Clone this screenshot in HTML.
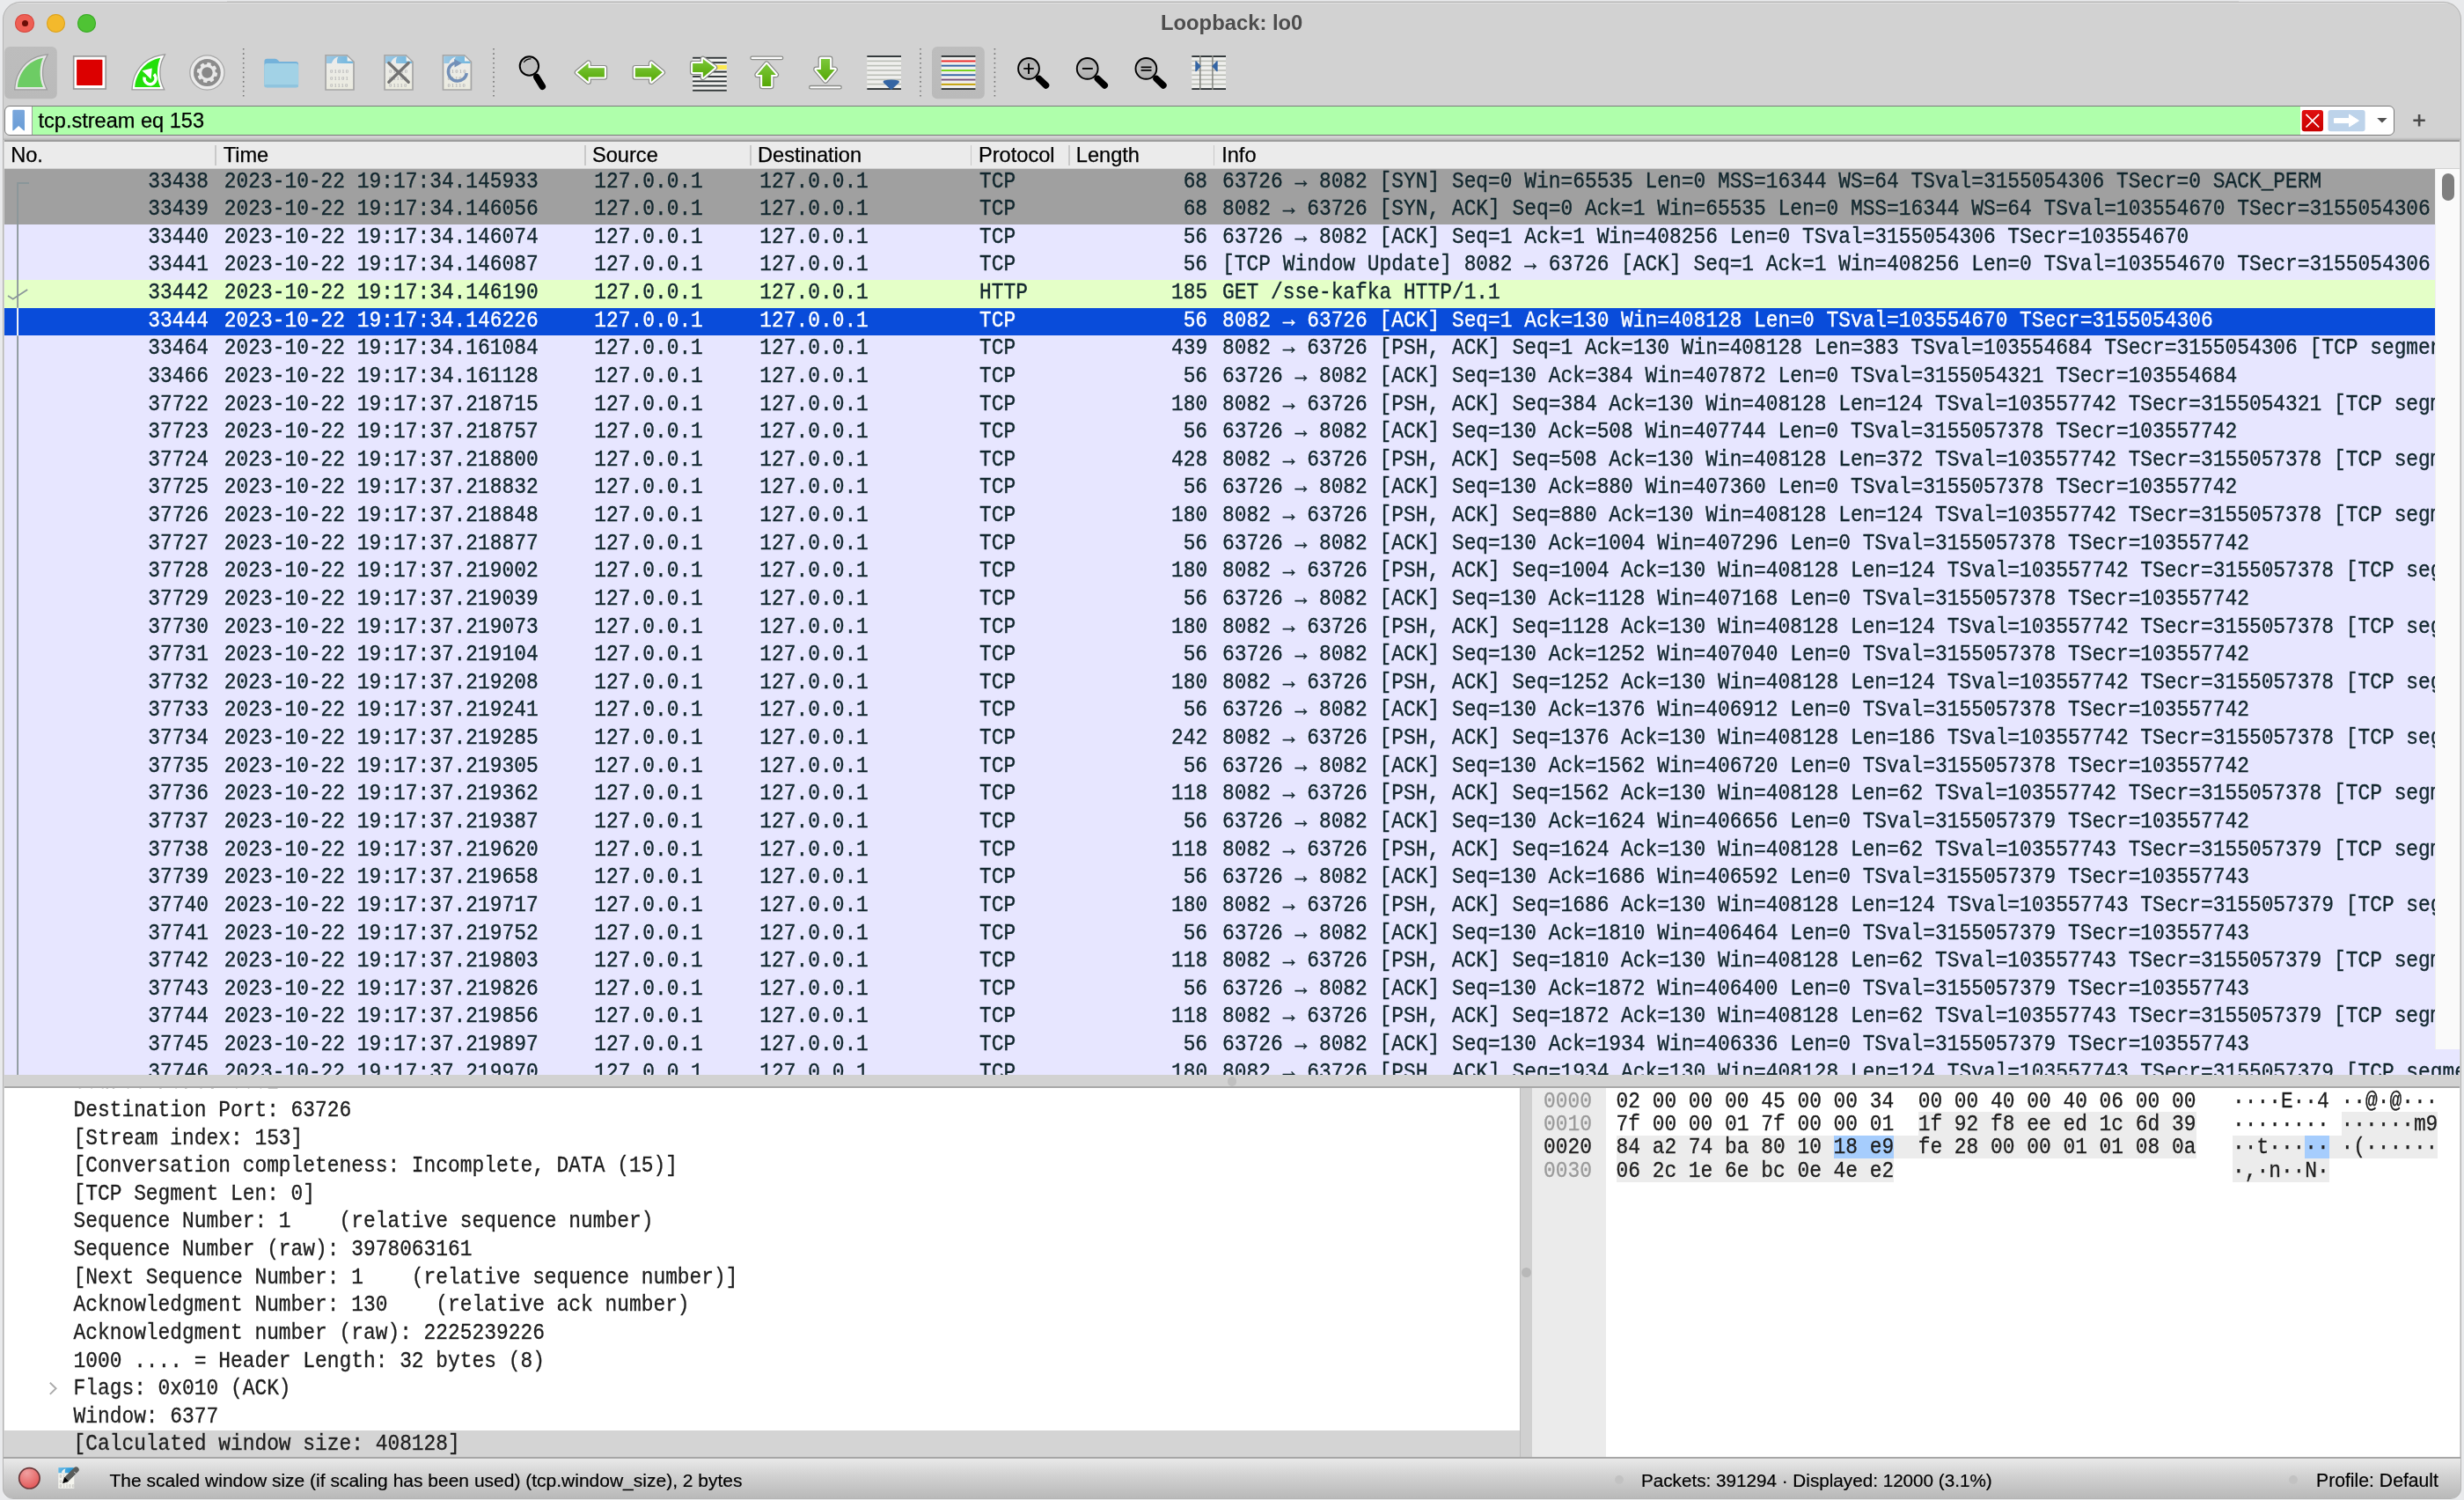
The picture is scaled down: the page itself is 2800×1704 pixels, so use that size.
<!DOCTYPE html>
<html><head><meta charset="utf-8"><title>Wireshark</title>
<style>
*{margin:0;padding:0;box-sizing:border-box}
html,body{width:2800px;height:1704px;overflow:hidden;background:#e9eaec;position:relative}
.a{position:absolute}
.sans{font-family:"Liberation Sans",sans-serif}
.mono{font-family:"Liberation Mono",monospace}
#clip{position:absolute;will-change:transform;left:0;top:0;width:2800px;height:1704px;clip-path:inset(1.8px 3px 2px 3px round 20px 20px 12px 12px);background:#d2d2d2}
.row{position:absolute;-webkit-text-stroke:0.35px currentColor;left:5px;width:2790px;height:31.630px;font-family:"Liberation Mono",monospace;font-size:22.888px;line-height:31.630px;color:#12272e;white-space:pre}
.row span{position:absolute;top:0;transform:scaleY(1.13);transform-origin:0 21.5px}
.hdr{position:absolute;-webkit-text-stroke:0.25px #000;top:161px;font-family:"Liberation Sans",sans-serif;font-size:23.6px;color:#000;white-space:pre;line-height:30px}
.sep{position:absolute;top:165px;width:1.5px;height:23px;background:#c9c9c9}
.dl{position:absolute;-webkit-text-stroke:0.3px currentColor;transform:scaleY(1.13);transform-origin:0 21.5px;left:83.5px;font-family:"Liberation Mono",monospace;font-size:22.888px;line-height:31.630px;color:#1e1e1e;white-space:pre}
.hx{position:absolute;-webkit-text-stroke:0.3px currentColor;transform:scaleY(1.13);transform-origin:0 19.3px;font-family:"Liberation Mono",monospace;font-size:22.888px;line-height:26.4px;color:#1e1e1e;white-space:pre}
</style></head><body>
<div id="clip">

<div class="a" style="left:0;top:2.6px;width:2800px;height:1.6px;background:#e2e2e2"></div>
<div class="a" style="left:17.4px;top:15.700000000000001px;width:21.2px;height:21.2px;border-radius:50%;background:#ee5f54;box-shadow:inset 0 0 0 1px #d54940"></div>
<div class="a" style="left:52.699999999999996px;top:15.700000000000001px;width:21.2px;height:21.2px;border-radius:50%;background:#f3b92c;box-shadow:inset 0 0 0 1px #d9a020"></div>
<div class="a" style="left:87.80000000000001px;top:15.700000000000001px;width:21.2px;height:21.2px;border-radius:50%;background:#4fc334;box-shadow:inset 0 0 0 1px #3ba828"></div>
<div class="a" style="left:24.5px;top:22.8px;width:7px;height:7px;border-radius:50%;background:#6a0e06"></div>
<div class="a sans" style="left:1319px;top:10.5px;font-size:23.8px;font-weight:bold;color:#4d4d4d;line-height:30px;white-space:pre">Loopback: lo0</div>
<svg class="a" style="left:0;top:0" width="1420" height="120" viewBox="0 0 1420 120">
<defs>
<linearGradient id="pbg" x1="0" y1="0" x2="0" y2="1"><stop offset="0" stop-color="#bdbdbd"/><stop offset="1" stop-color="#bababa"/></linearGradient>
<linearGradient id="grn" x1="0" y1="0" x2="0" y2="1"><stop offset="0" stop-color="#7cc83a"/><stop offset="1" stop-color="#56a806"/></linearGradient>
<linearGradient id="lens" x1="0" y1="0" x2="0" y2="1"><stop offset="0" stop-color="#a9a9a9"/><stop offset="0.5" stop-color="#bdbdbd"/><stop offset="1" stop-color="#a9a9a9"/></linearGradient>
<linearGradient id="docblue" x1="0" y1="0" x2="1" y2="0"><stop offset="0" stop-color="#9cc8e4"/><stop offset="1" stop-color="#6fb5dd"/></linearGradient>
<linearGradient id="docbody" x1="0" y1="0" x2="0" y2="1"><stop offset="0" stop-color="#ececec"/><stop offset="1" stop-color="#ebebdf"/></linearGradient>
</defs>
<!-- pressed start bg -->
<rect x="5.1" y="53" width="59.7" height="59.2" rx="6" fill="url(#pbg)"/>
<!-- fin 1 -->
<g stroke-linejoin="miter" stroke-miterlimit="10">
<path d="M19.9,99 C21,84 31,69 49,65.8 C45,74 44,88 48.9,99 Z" fill="#6dcc64" stroke="#9c9c9c" stroke-width="7.2"/>
<path d="M19.9,99 C21,84 31,69 49,65.8 C45,74 44,88 48.9,99 Z" fill="#6dcc64" stroke="#e6e6e6" stroke-width="4.6"/>
<path d="M19.9,99 C21,84 31,69 49,65.8 C45,74 44,88 48.9,99 Z" fill="#6dcc64"/>
</g>
<!-- stop -->
<rect x="83.7" y="63.9" width="36.5" height="37.1" fill="#fff" stroke="#999" stroke-width="1.7"/>
<rect x="87.1" y="67.8" width="29.3" height="29.2" rx="0.8" fill="#dc0000"/>
<!-- fin 2 restart -->
<g stroke-linejoin="miter" stroke-miterlimit="10" transform="translate(133.3,0)">
<path d="M19.9,99 C21,84 31,69 49,65.8 C45,74 44,88 48.9,99 Z" fill="#22e00a" stroke="#999" stroke-width="7.2"/>
<path d="M19.9,99 C21,84 31,69 49,65.8 C45,74 44,88 48.9,99 Z" fill="#22e00a" stroke="#fff" stroke-width="4.6"/>
<path d="M19.9,99 C21,84 31,69 49,65.8 C45,74 44,88 48.9,99 Z" fill="#22e00a"/>
</g>
<path d="M174.9,84.4 A6.5,6.5 0 1 1 164.2,87.6" fill="none" stroke="#fff" stroke-width="3.6"/>
<path d="M161.5,80.3 L172.8,77.4 L171.6,90 Z" fill="#fff"/>
<!-- gear -->
<circle cx="235.4" cy="82.5" r="19.6" fill="#ebebeb" stroke="#a8a8a8" stroke-width="1.3"/>
<circle cx="235.4" cy="82.5" r="15.4" fill="#8c8c8c"/>
<g fill="#e9e9e9" transform="translate(235.4,82.5) rotate(12)">
<circle r="9.4"/>
<rect x="-2.3" y="-11.6" width="4.6" height="23.2" rx="1"/>
<rect x="-2.3" y="-11.6" width="4.6" height="23.2" rx="1" transform="rotate(45)"/>
<rect x="-2.3" y="-11.6" width="4.6" height="23.2" rx="1" transform="rotate(90)"/>
<rect x="-2.3" y="-11.6" width="4.6" height="23.2" rx="1" transform="rotate(135)"/>
</g>
<circle cx="235.4" cy="82.5" r="6.2" fill="#888"/>
<!-- separators -->
<g fill="#555">
<path id="dots" d="M275.9,55 h1.6 v1.6 h-1.6z M275.9,60.3 h1.6 v1.6 h-1.6z M275.9,65.6 h1.6 v1.6 h-1.6z M275.9,70.9 h1.6 v1.6 h-1.6z M275.9,76.2 h1.6 v1.6 h-1.6z M275.9,81.5 h1.6 v1.6 h-1.6z M275.9,86.8 h1.6 v1.6 h-1.6z M275.9,92.1 h1.6 v1.6 h-1.6z M275.9,97.4 h1.6 v1.6 h-1.6z M275.9,102.7 h1.6 v1.6 h-1.6z M275.9,108 h1.6 v1.6 h-1.6z" opacity="0.75"/>
<use href="#dots" x="284.3"/>
<use href="#dots" x="769.3"/>
<use href="#dots" x="853.7"/>
</g>
<!-- folder -->
<path d="M300.4,99.3 V69.7 Q300.4,66.7 303.4,66.7 H312.6 Q314.6,66.7 316,68.6 L317.4,69.9 H336.1 Q339.1,69.9 339.1,72.9 V96.3 Q339.1,99.3 336.1,99.3 H303.4 Q300.4,99.3 300.4,96.3 Z" fill="#74b2da"/>
<rect x="300.4" y="72" width="38.7" height="27.3" rx="3" fill="#a2d2e6"/>
<rect x="300.4" y="96" width="38.7" height="3.3" rx="1.5" fill="#8fc4de"/>
<!-- doc template -->
<g id="doc">
<path d="M370.1,62.9 H394.3 L402,70.4 V102 H370.1 Z" fill="url(#docbody)" stroke="#a5a5a5" stroke-width="1.7" stroke-linejoin="miter"/>
<path d="M370.9,63.7 H394 L401.2,70.7 V71.9 H370.9 Z" fill="url(#docblue)"/>
<path d="M376.7,71.9 C378.5,67.5 381,65 384.4,64.4 C383,66.5 382.6,69.5 383.3,71.9 Z" fill="#ebebeb"/>
<path d="M394.6,64 V69.4 H400.3 Z" fill="#f2f2ef"/>
<g font-family="Liberation Serif" font-size="6.8" font-weight="bold" fill="#bcbcbc" letter-spacing="1.05">
<text x="375" y="82.6">01010</text>
<text x="375" y="90.5">01101</text>
<text x="375" y="98.5">01110</text>
</g>
</g>
<use href="#doc" x="67"/>
<use href="#doc" x="133.4"/>
<path d="M441.8,71.5 L464.2,93.3 M464.2,71.5 L441.8,93.3" stroke="#737373" stroke-width="3.3" stroke-linecap="round"/>
<path d="M530.3,82.9 A10.5,10.5 0 1 1 519,71" fill="none" stroke="#7390b8" stroke-width="3.5"/>
<path d="M516.2,67 L524.8,71.8 L516.6,76.6 Z" fill="#7390b8"/>
<!-- magnifier find -->
<circle cx="601.4" cy="75" r="10.7" fill="#bfbfbf" stroke="#000" stroke-width="2"/>
<path d="M595.5,70.5 Q598,67 603,66.8" fill="none" stroke="#000" stroke-width="1.2" stroke-linecap="round"/>
<path d="M609.8,87.5 L616.4,98.3" stroke="#000" stroke-width="7.4" stroke-linecap="round"/>
<!-- left arrow -->
<g stroke-linejoin="round">
<path d="M656,82.3 L668.6,71.8 V77.2 H686.9 V87.4 H668.6 V92.8 Z" fill="#888" stroke="#8a8c88" stroke-width="6.6"/>
<path d="M656,82.3 L668.6,71.8 V77.2 H686.9 V87.4 H668.6 V92.8 Z" fill="#fff" stroke="#fff" stroke-width="4.2"/>
<path d="M656,82.3 L668.6,71.8 V77.2 H686.9 V87.4 H668.6 V92.8 Z" fill="url(#grn)"/>
<!-- right arrow -->
<path d="M752.75,82.3 L740.15,71.8 V77.2 H721.85 V87.4 H740.15 V92.8 Z" fill="#888" stroke="#8a8c88" stroke-width="6.6"/>
<path d="M752.75,82.3 L740.15,71.8 V77.2 H721.85 V87.4 H740.15 V92.8 Z" fill="#fff" stroke="#fff" stroke-width="4.2"/>
<path d="M752.75,82.3 L740.15,71.8 V77.2 H721.85 V87.4 H740.15 V92.8 Z" fill="url(#grn)"/>
</g>
<!-- goto packet -->
<rect x="787.1" y="64.8" width="38.7" height="38.8" fill="#efefed"/>
<g fill="#2e3436">
<rect x="787.1" y="64.8" width="38.7" height="1.9"/>
<rect x="787.1" y="70.2" width="38.7" height="1.9"/>
<rect x="787.1" y="80.6" width="38.7" height="1.9"/>
<rect x="787.1" y="86" width="38.7" height="1.9"/>
<rect x="787.1" y="91.4" width="38.7" height="1.9"/>
<rect x="787.1" y="96.5" width="38.7" height="1.9"/>
<rect x="787.1" y="101.8" width="38.7" height="1.9"/>
</g>
<rect x="812" y="74" width="13.8" height="4.9" fill="#fce94f"/>
<g stroke-linejoin="round">
<path d="M812.1,76.7 L798.8,66.9 V72 H787.1 V82 H798.8 V87.9 Z" fill="#888" stroke="#8a8c88" stroke-width="6.4"/>
<path d="M812.1,76.7 L798.8,66.9 V72 H787.1 V82 H798.8 V87.9 Z" fill="#fff" stroke="#fff" stroke-width="4"/>
<path d="M812.1,76.7 L798.8,66.9 V72 H787.1 V82 H798.8 V87.9 Z" fill="url(#grn)"/>
<!-- first packet -->
<rect x="852.9" y="64.1" width="36.8" height="3.5" rx="1.7" fill="#fff" stroke="#8a8c88" stroke-width="1.3"/>
<path d="M871.1,72.8 L881.8,85 H876.2 V97.9 H866.2 V85 H860.6 Z" fill="#888" stroke="#8a8c88" stroke-width="6.6"/>
<path d="M871.1,72.8 L881.8,85 H876.2 V97.9 H866.2 V85 H860.6 Z" fill="#fff" stroke="#fff" stroke-width="4.2"/>
<path d="M871.1,72.8 L881.8,85 H876.2 V97.9 H866.2 V85 H860.6 Z" fill="url(#grn)"/>
<!-- last packet -->
<rect x="919.6" y="97.5" width="36.6" height="3.4" rx="1.7" fill="#fff" stroke="#8a8c88" stroke-width="1.3"/>
<path d="M938,91.5 L948.7,78.9 H943.1 V66.9 H932.9 V78.9 H927.5 Z" fill="#888" stroke="#8a8c88" stroke-width="6.6"/>
<path d="M938,91.5 L948.7,78.9 H943.1 V66.9 H932.9 V78.9 H927.5 Z" fill="#fff" stroke="#fff" stroke-width="4.2"/>
<path d="M938,91.5 L948.7,78.9 H943.1 V66.9 H932.9 V78.9 H927.5 Z" fill="url(#grn)"/>
</g>
<!-- autoscroll -->
<g id="stripes">
<rect x="985.3" y="63.1" width="38.7" height="38.8" fill="#efefed"/>
<g fill="#babdb6">
<rect x="985.3" y="68.6" width="38.7" height="1.6"/>
<rect x="985.3" y="73.8" width="38.7" height="1.6"/>
<rect x="985.3" y="79.1" width="38.7" height="1.6"/>
<rect x="985.3" y="84.5" width="38.7" height="1.6"/>
<rect x="985.3" y="89.6" width="38.7" height="1.6"/>
<rect x="985.3" y="94.8" width="38.7" height="1.6"/>
</g>
<rect x="985.3" y="63.1" width="38.7" height="1.9" fill="#2e3436"/>
<rect x="985.3" y="100.1" width="38.7" height="1.9" fill="#2e3436"/>
</g>
<path d="M1004.5,91.6 Q1012.8,89.6 1021,91.6 Q1022.5,92.6 1021.5,94 L1013.5,101.5 Q1012.8,102.2 1012,101.5 L1004,94 Q1003,92.6 1004.5,91.6 Z" fill="#3465a4"/>
<!-- colorize pressed -->
<rect x="1059" y="53" width="59.8" height="59.3" rx="6" fill="url(#pbg)"/>
<rect x="1069.7" y="63.1" width="38.8" height="38.8" fill="#efefed"/>
<rect x="1069.7" y="63" width="38.8" height="1.9" fill="#2e3436"/>
<rect x="1069.7" y="68.5" width="38.8" height="1.9" fill="#ef2929"/>
<rect x="1069.7" y="73.7" width="38.8" height="1.9" fill="#3465a4"/>
<rect x="1069.7" y="79.1" width="38.8" height="1.9" fill="#73d216"/>
<rect x="1069.7" y="84.3" width="38.8" height="1.9" fill="#3465a4"/>
<rect x="1069.7" y="89.6" width="38.8" height="1.9" fill="#75507b"/>
<rect x="1069.7" y="94.9" width="38.8" height="1.9" fill="#c4a000"/>
<rect x="1069.7" y="100.1" width="38.8" height="1.9" fill="#2e3436"/>
<!-- zoom in/out/normal -->
<g id="zl">
<circle cx="1169" cy="77.9" r="11.9" fill="url(#lens)" stroke="#000" stroke-width="1.9"/>
<path d="M1180.6,89.3 L1188.6,97" stroke="#000" stroke-width="7.4" stroke-linecap="round"/>
</g>
<path d="M1163.2,77.9 H1174.8 M1169,72 V84" stroke="#000" stroke-width="1.9"/>
<use href="#zl" x="66.7"/>
<path d="M1229.9,77.9 H1241.8" stroke="#000" stroke-width="1.9"/>
<use href="#zl" x="133.4"/>
<path d="M1296.6,76.4 H1308.5 M1296.6,79.9 H1308.5" stroke="#000" stroke-width="1.6"/>
<!-- resize columns -->
<use href="#stripes" x="369"/>
<rect x="1363" y="63.1" width="1.6" height="38.8" fill="#888a85"/>
<rect x="1377.1" y="63.1" width="1.6" height="38.8" fill="#888a85"/>
<path d="M1358.3,70 Q1358,69 1359.3,69.3 L1364.8,75.3 L1359.3,81.3 Q1358,81.6 1358.3,80.6 Z" fill="#3465a4"/>
<path d="M1383.7,70 Q1384,69 1382.7,69.3 L1377.2,75.3 L1382.7,81.3 Q1384,81.6 1383.7,80.6 Z" fill="#3465a4"/>
</svg>

<div class="a" style="left:5.3px;top:119.9px;width:2716px;height:34.2px;border:1.8px solid #7a7a7a;border-radius:6px;background:#fff;overflow:hidden"><div class="a" style="left:29.4px;top:0;bottom:0;width:1.6px;background:#9c9c9c"></div><div class="a" style="left:31px;top:0;bottom:0;width:2577px;background:#afffab"></div></div>
<svg class="a" style="left:0;top:110px" width="2800" height="50" viewBox="0 110 2800 50">
<defs>
<linearGradient id="bm" x1="0" y1="0" x2="0" y2="1"><stop offset="0" stop-color="#7aa7dc"/><stop offset="1" stop-color="#6a9dd6"/></linearGradient>
<linearGradient id="rx" x1="0" y1="0" x2="0" y2="1"><stop offset="0" stop-color="#e01010"/><stop offset="1" stop-color="#c80000"/></linearGradient>
</defs>
<path d="M14.3,126.2 Q14.3,124.8 15.7,124.8 H26.6 Q28,124.8 28,126.2 V147.4 Q28,149 26.6,148 L21.15,143 L15.7,148 Q14.3,149 14.3,147.4 Z" fill="url(#bm)"/>
<rect x="2615.7" y="125" width="24.3" height="24.3" rx="3" fill="url(#rx)"/>
<path d="M2620.5,129.8 L2635.2,144.5 M2635.2,129.8 L2620.5,144.5" stroke="#fff" stroke-width="1.7"/>
<rect x="2645.5" y="125" width="42.1" height="24.3" rx="3" fill="#bdd3ea"/>
<path d="M2652.5,134.6 H2669.5 V130 L2680.5,137.1 L2669.5,144 V139.6 H2652.5 Z" fill="#fff" stroke="#fff" stroke-width="1" stroke-linejoin="round"/>
<path d="M2701.2,134 H2712.6 L2706.9,139.6 Z" fill="#505050"/>
<path d="M2742.4,136.8 H2755.8 M2749.1,130 V143.6" stroke="#4a4a4a" stroke-width="2.6"/>
</svg>

<div class="a sans" style="left:43.5px;top:122px;font-size:23.55px;-webkit-text-stroke:0.25px #000;line-height:30px;color:#000;white-space:pre">tcp.stream eq 153</div>
<div class="a" style="left:0;top:156px;width:2800px;height:3px;background:linear-gradient(#d2d2d2,#b4b4b4)"></div>
<div class="a" style="left:5px;top:159.3px;width:2790px;height:1.5px;background:#9c9c9c"></div>
<div class="a" style="left:5px;top:160.8px;width:2790px;height:30.7px;background:#ebebeb"></div>
<div class="hdr" style="left:12.2px">No.</div>
<div class="hdr" style="left:253.7px">Time</div>
<div class="hdr" style="left:673px">Source</div>
<div class="hdr" style="left:861px">Destination</div>
<div class="hdr" style="left:1112px">Protocol</div>
<div class="hdr" style="left:1222.8px">Length</div>
<div class="hdr" style="left:1388.2px">Info</div>
<div class="sep" style="left:244.3px"></div>
<div class="sep" style="left:664.1px"></div>
<div class="sep" style="left:852.1px"></div>
<div class="sep" style="left:1102.9px"></div>
<div class="sep" style="left:1214px"></div>
<div class="sep" style="left:1378.9px"></div>
<div class="a" style="left:5px;top:191.5px;width:2790px;height:1029.5px;overflow:hidden">
<div class="row" style="left:0;top:0.000px;background:#a0a0a0;color:#12272e;width:2790px"><span style="right:2558.0px">33438</span><span style="left:249.8px">2023-10-22 19:17:34.145933</span><span style="left:670.3px">127.0.0.1</span><span style="left:858.3px">127.0.0.1</span><span style="left:1108.1px">TCP</span><span style="right:1422.9px">68</span><span style="left:1384.1px">63726 → 8082 [SYN] Seq=0 Win=65535 Len=0 MSS=16344 WS=64 TSval=3155054306 TSecr=0 SACK_PERM</span></div>
<div class="row" style="left:0;top:31.630px;background:#a0a0a0;color:#12272e;width:2790px"><span style="right:2558.0px">33439</span><span style="left:249.8px">2023-10-22 19:17:34.146056</span><span style="left:670.3px">127.0.0.1</span><span style="left:858.3px">127.0.0.1</span><span style="left:1108.1px">TCP</span><span style="right:1422.9px">68</span><span style="left:1384.1px">8082 → 63726 [SYN, ACK] Seq=0 Ack=1 Win=65535 Len=0 MSS=16344 WS=64 TSval=103554670 TSecr=3155054306</span></div>
<div class="row" style="left:0;top:63.260px;background:#e7e6ff;color:#12272e;width:2790px"><span style="right:2558.0px">33440</span><span style="left:249.8px">2023-10-22 19:17:34.146074</span><span style="left:670.3px">127.0.0.1</span><span style="left:858.3px">127.0.0.1</span><span style="left:1108.1px">TCP</span><span style="right:1422.9px">56</span><span style="left:1384.1px">63726 → 8082 [ACK] Seq=1 Ack=1 Win=408256 Len=0 TSval=3155054306 TSecr=103554670</span></div>
<div class="row" style="left:0;top:94.890px;background:#e7e6ff;color:#12272e;width:2790px"><span style="right:2558.0px">33441</span><span style="left:249.8px">2023-10-22 19:17:34.146087</span><span style="left:670.3px">127.0.0.1</span><span style="left:858.3px">127.0.0.1</span><span style="left:1108.1px">TCP</span><span style="right:1422.9px">56</span><span style="left:1384.1px">[TCP Window Update] 8082 → 63726 [ACK] Seq=1 Ack=1 Win=408256 Len=0 TSval=103554670 TSecr=3155054306</span></div>
<div class="row" style="left:0;top:126.520px;background:#e4ffc7;color:#12272e;width:2790px"><span style="right:2558.0px">33442</span><span style="left:249.8px">2023-10-22 19:17:34.146190</span><span style="left:670.3px">127.0.0.1</span><span style="left:858.3px">127.0.0.1</span><span style="left:1108.1px">HTTP</span><span style="right:1422.9px">185</span><span style="left:1384.1px">GET /sse-kafka HTTP/1.1</span></div>
<div class="row" style="left:0;top:158.150px;background:#094cda;color:#fff;width:2790px"><span style="right:2558.0px">33444</span><span style="left:249.8px">2023-10-22 19:17:34.146226</span><span style="left:670.3px">127.0.0.1</span><span style="left:858.3px">127.0.0.1</span><span style="left:1108.1px">TCP</span><span style="right:1422.9px">56</span><span style="left:1384.1px">8082 → 63726 [ACK] Seq=1 Ack=130 Win=408128 Len=0 TSval=103554670 TSecr=3155054306</span></div>
<div class="row" style="left:0;top:189.780px;background:#e7e6ff;color:#12272e;width:2790px"><span style="right:2558.0px">33464</span><span style="left:249.8px">2023-10-22 19:17:34.161084</span><span style="left:670.3px">127.0.0.1</span><span style="left:858.3px">127.0.0.1</span><span style="left:1108.1px">TCP</span><span style="right:1422.9px">439</span><span style="left:1384.1px">8082 → 63726 [PSH, ACK] Seq=1 Ack=130 Win=408128 Len=383 TSval=103554684 TSecr=3155054306 [TCP segment of a reassembled PDU]</span></div>
<div class="row" style="left:0;top:221.410px;background:#e7e6ff;color:#12272e;width:2790px"><span style="right:2558.0px">33466</span><span style="left:249.8px">2023-10-22 19:17:34.161128</span><span style="left:670.3px">127.0.0.1</span><span style="left:858.3px">127.0.0.1</span><span style="left:1108.1px">TCP</span><span style="right:1422.9px">56</span><span style="left:1384.1px">63726 → 8082 [ACK] Seq=130 Ack=384 Win=407872 Len=0 TSval=3155054321 TSecr=103554684</span></div>
<div class="row" style="left:0;top:253.040px;background:#e7e6ff;color:#12272e;width:2790px"><span style="right:2558.0px">37722</span><span style="left:249.8px">2023-10-22 19:17:37.218715</span><span style="left:670.3px">127.0.0.1</span><span style="left:858.3px">127.0.0.1</span><span style="left:1108.1px">TCP</span><span style="right:1422.9px">180</span><span style="left:1384.1px">8082 → 63726 [PSH, ACK] Seq=384 Ack=130 Win=408128 Len=124 TSval=103557742 TSecr=3155054321 [TCP segment of a reassembled PDU]</span></div>
<div class="row" style="left:0;top:284.670px;background:#e7e6ff;color:#12272e;width:2790px"><span style="right:2558.0px">37723</span><span style="left:249.8px">2023-10-22 19:17:37.218757</span><span style="left:670.3px">127.0.0.1</span><span style="left:858.3px">127.0.0.1</span><span style="left:1108.1px">TCP</span><span style="right:1422.9px">56</span><span style="left:1384.1px">63726 → 8082 [ACK] Seq=130 Ack=508 Win=407744 Len=0 TSval=3155057378 TSecr=103557742</span></div>
<div class="row" style="left:0;top:316.300px;background:#e7e6ff;color:#12272e;width:2790px"><span style="right:2558.0px">37724</span><span style="left:249.8px">2023-10-22 19:17:37.218800</span><span style="left:670.3px">127.0.0.1</span><span style="left:858.3px">127.0.0.1</span><span style="left:1108.1px">TCP</span><span style="right:1422.9px">428</span><span style="left:1384.1px">8082 → 63726 [PSH, ACK] Seq=508 Ack=130 Win=408128 Len=372 TSval=103557742 TSecr=3155057378 [TCP segment of a reassembled PDU]</span></div>
<div class="row" style="left:0;top:347.930px;background:#e7e6ff;color:#12272e;width:2790px"><span style="right:2558.0px">37725</span><span style="left:249.8px">2023-10-22 19:17:37.218832</span><span style="left:670.3px">127.0.0.1</span><span style="left:858.3px">127.0.0.1</span><span style="left:1108.1px">TCP</span><span style="right:1422.9px">56</span><span style="left:1384.1px">63726 → 8082 [ACK] Seq=130 Ack=880 Win=407360 Len=0 TSval=3155057378 TSecr=103557742</span></div>
<div class="row" style="left:0;top:379.560px;background:#e7e6ff;color:#12272e;width:2790px"><span style="right:2558.0px">37726</span><span style="left:249.8px">2023-10-22 19:17:37.218848</span><span style="left:670.3px">127.0.0.1</span><span style="left:858.3px">127.0.0.1</span><span style="left:1108.1px">TCP</span><span style="right:1422.9px">180</span><span style="left:1384.1px">8082 → 63726 [PSH, ACK] Seq=880 Ack=130 Win=408128 Len=124 TSval=103557742 TSecr=3155057378 [TCP segment of a reassembled PDU]</span></div>
<div class="row" style="left:0;top:411.190px;background:#e7e6ff;color:#12272e;width:2790px"><span style="right:2558.0px">37727</span><span style="left:249.8px">2023-10-22 19:17:37.218877</span><span style="left:670.3px">127.0.0.1</span><span style="left:858.3px">127.0.0.1</span><span style="left:1108.1px">TCP</span><span style="right:1422.9px">56</span><span style="left:1384.1px">63726 → 8082 [ACK] Seq=130 Ack=1004 Win=407296 Len=0 TSval=3155057378 TSecr=103557742</span></div>
<div class="row" style="left:0;top:442.820px;background:#e7e6ff;color:#12272e;width:2790px"><span style="right:2558.0px">37728</span><span style="left:249.8px">2023-10-22 19:17:37.219002</span><span style="left:670.3px">127.0.0.1</span><span style="left:858.3px">127.0.0.1</span><span style="left:1108.1px">TCP</span><span style="right:1422.9px">180</span><span style="left:1384.1px">8082 → 63726 [PSH, ACK] Seq=1004 Ack=130 Win=408128 Len=124 TSval=103557742 TSecr=3155057378 [TCP segment of a reassembled PDU]</span></div>
<div class="row" style="left:0;top:474.450px;background:#e7e6ff;color:#12272e;width:2790px"><span style="right:2558.0px">37729</span><span style="left:249.8px">2023-10-22 19:17:37.219039</span><span style="left:670.3px">127.0.0.1</span><span style="left:858.3px">127.0.0.1</span><span style="left:1108.1px">TCP</span><span style="right:1422.9px">56</span><span style="left:1384.1px">63726 → 8082 [ACK] Seq=130 Ack=1128 Win=407168 Len=0 TSval=3155057378 TSecr=103557742</span></div>
<div class="row" style="left:0;top:506.080px;background:#e7e6ff;color:#12272e;width:2790px"><span style="right:2558.0px">37730</span><span style="left:249.8px">2023-10-22 19:17:37.219073</span><span style="left:670.3px">127.0.0.1</span><span style="left:858.3px">127.0.0.1</span><span style="left:1108.1px">TCP</span><span style="right:1422.9px">180</span><span style="left:1384.1px">8082 → 63726 [PSH, ACK] Seq=1128 Ack=130 Win=408128 Len=124 TSval=103557742 TSecr=3155057378 [TCP segment of a reassembled PDU]</span></div>
<div class="row" style="left:0;top:537.710px;background:#e7e6ff;color:#12272e;width:2790px"><span style="right:2558.0px">37731</span><span style="left:249.8px">2023-10-22 19:17:37.219104</span><span style="left:670.3px">127.0.0.1</span><span style="left:858.3px">127.0.0.1</span><span style="left:1108.1px">TCP</span><span style="right:1422.9px">56</span><span style="left:1384.1px">63726 → 8082 [ACK] Seq=130 Ack=1252 Win=407040 Len=0 TSval=3155057378 TSecr=103557742</span></div>
<div class="row" style="left:0;top:569.340px;background:#e7e6ff;color:#12272e;width:2790px"><span style="right:2558.0px">37732</span><span style="left:249.8px">2023-10-22 19:17:37.219208</span><span style="left:670.3px">127.0.0.1</span><span style="left:858.3px">127.0.0.1</span><span style="left:1108.1px">TCP</span><span style="right:1422.9px">180</span><span style="left:1384.1px">8082 → 63726 [PSH, ACK] Seq=1252 Ack=130 Win=408128 Len=124 TSval=103557742 TSecr=3155057378 [TCP segment of a reassembled PDU]</span></div>
<div class="row" style="left:0;top:600.970px;background:#e7e6ff;color:#12272e;width:2790px"><span style="right:2558.0px">37733</span><span style="left:249.8px">2023-10-22 19:17:37.219241</span><span style="left:670.3px">127.0.0.1</span><span style="left:858.3px">127.0.0.1</span><span style="left:1108.1px">TCP</span><span style="right:1422.9px">56</span><span style="left:1384.1px">63726 → 8082 [ACK] Seq=130 Ack=1376 Win=406912 Len=0 TSval=3155057378 TSecr=103557742</span></div>
<div class="row" style="left:0;top:632.600px;background:#e7e6ff;color:#12272e;width:2790px"><span style="right:2558.0px">37734</span><span style="left:249.8px">2023-10-22 19:17:37.219285</span><span style="left:670.3px">127.0.0.1</span><span style="left:858.3px">127.0.0.1</span><span style="left:1108.1px">TCP</span><span style="right:1422.9px">242</span><span style="left:1384.1px">8082 → 63726 [PSH, ACK] Seq=1376 Ack=130 Win=408128 Len=186 TSval=103557742 TSecr=3155057378 [TCP segment of a reassembled PDU]</span></div>
<div class="row" style="left:0;top:664.230px;background:#e7e6ff;color:#12272e;width:2790px"><span style="right:2558.0px">37735</span><span style="left:249.8px">2023-10-22 19:17:37.219305</span><span style="left:670.3px">127.0.0.1</span><span style="left:858.3px">127.0.0.1</span><span style="left:1108.1px">TCP</span><span style="right:1422.9px">56</span><span style="left:1384.1px">63726 → 8082 [ACK] Seq=130 Ack=1562 Win=406720 Len=0 TSval=3155057378 TSecr=103557742</span></div>
<div class="row" style="left:0;top:695.860px;background:#e7e6ff;color:#12272e;width:2790px"><span style="right:2558.0px">37736</span><span style="left:249.8px">2023-10-22 19:17:37.219362</span><span style="left:670.3px">127.0.0.1</span><span style="left:858.3px">127.0.0.1</span><span style="left:1108.1px">TCP</span><span style="right:1422.9px">118</span><span style="left:1384.1px">8082 → 63726 [PSH, ACK] Seq=1562 Ack=130 Win=408128 Len=62 TSval=103557742 TSecr=3155057378 [TCP segment of a reassembled PDU]</span></div>
<div class="row" style="left:0;top:727.490px;background:#e7e6ff;color:#12272e;width:2790px"><span style="right:2558.0px">37737</span><span style="left:249.8px">2023-10-22 19:17:37.219387</span><span style="left:670.3px">127.0.0.1</span><span style="left:858.3px">127.0.0.1</span><span style="left:1108.1px">TCP</span><span style="right:1422.9px">56</span><span style="left:1384.1px">63726 → 8082 [ACK] Seq=130 Ack=1624 Win=406656 Len=0 TSval=3155057379 TSecr=103557742</span></div>
<div class="row" style="left:0;top:759.120px;background:#e7e6ff;color:#12272e;width:2790px"><span style="right:2558.0px">37738</span><span style="left:249.8px">2023-10-22 19:17:37.219620</span><span style="left:670.3px">127.0.0.1</span><span style="left:858.3px">127.0.0.1</span><span style="left:1108.1px">TCP</span><span style="right:1422.9px">118</span><span style="left:1384.1px">8082 → 63726 [PSH, ACK] Seq=1624 Ack=130 Win=408128 Len=62 TSval=103557743 TSecr=3155057379 [TCP segment of a reassembled PDU]</span></div>
<div class="row" style="left:0;top:790.750px;background:#e7e6ff;color:#12272e;width:2790px"><span style="right:2558.0px">37739</span><span style="left:249.8px">2023-10-22 19:17:37.219658</span><span style="left:670.3px">127.0.0.1</span><span style="left:858.3px">127.0.0.1</span><span style="left:1108.1px">TCP</span><span style="right:1422.9px">56</span><span style="left:1384.1px">63726 → 8082 [ACK] Seq=130 Ack=1686 Win=406592 Len=0 TSval=3155057379 TSecr=103557743</span></div>
<div class="row" style="left:0;top:822.380px;background:#e7e6ff;color:#12272e;width:2790px"><span style="right:2558.0px">37740</span><span style="left:249.8px">2023-10-22 19:17:37.219717</span><span style="left:670.3px">127.0.0.1</span><span style="left:858.3px">127.0.0.1</span><span style="left:1108.1px">TCP</span><span style="right:1422.9px">180</span><span style="left:1384.1px">8082 → 63726 [PSH, ACK] Seq=1686 Ack=130 Win=408128 Len=124 TSval=103557743 TSecr=3155057379 [TCP segment of a reassembled PDU]</span></div>
<div class="row" style="left:0;top:854.010px;background:#e7e6ff;color:#12272e;width:2790px"><span style="right:2558.0px">37741</span><span style="left:249.8px">2023-10-22 19:17:37.219752</span><span style="left:670.3px">127.0.0.1</span><span style="left:858.3px">127.0.0.1</span><span style="left:1108.1px">TCP</span><span style="right:1422.9px">56</span><span style="left:1384.1px">63726 → 8082 [ACK] Seq=130 Ack=1810 Win=406464 Len=0 TSval=3155057379 TSecr=103557743</span></div>
<div class="row" style="left:0;top:885.640px;background:#e7e6ff;color:#12272e;width:2790px"><span style="right:2558.0px">37742</span><span style="left:249.8px">2023-10-22 19:17:37.219803</span><span style="left:670.3px">127.0.0.1</span><span style="left:858.3px">127.0.0.1</span><span style="left:1108.1px">TCP</span><span style="right:1422.9px">118</span><span style="left:1384.1px">8082 → 63726 [PSH, ACK] Seq=1810 Ack=130 Win=408128 Len=62 TSval=103557743 TSecr=3155057379 [TCP segment of a reassembled PDU]</span></div>
<div class="row" style="left:0;top:917.270px;background:#e7e6ff;color:#12272e;width:2790px"><span style="right:2558.0px">37743</span><span style="left:249.8px">2023-10-22 19:17:37.219826</span><span style="left:670.3px">127.0.0.1</span><span style="left:858.3px">127.0.0.1</span><span style="left:1108.1px">TCP</span><span style="right:1422.9px">56</span><span style="left:1384.1px">63726 → 8082 [ACK] Seq=130 Ack=1872 Win=406400 Len=0 TSval=3155057379 TSecr=103557743</span></div>
<div class="row" style="left:0;top:948.900px;background:#e7e6ff;color:#12272e;width:2790px"><span style="right:2558.0px">37744</span><span style="left:249.8px">2023-10-22 19:17:37.219856</span><span style="left:670.3px">127.0.0.1</span><span style="left:858.3px">127.0.0.1</span><span style="left:1108.1px">TCP</span><span style="right:1422.9px">118</span><span style="left:1384.1px">8082 → 63726 [PSH, ACK] Seq=1872 Ack=130 Win=408128 Len=62 TSval=103557743 TSecr=3155057379 [TCP segment of a reassembled PDU]</span></div>
<div class="row" style="left:0;top:980.530px;background:#e7e6ff;color:#12272e;width:2790px"><span style="right:2558.0px">37745</span><span style="left:249.8px">2023-10-22 19:17:37.219897</span><span style="left:670.3px">127.0.0.1</span><span style="left:858.3px">127.0.0.1</span><span style="left:1108.1px">TCP</span><span style="right:1422.9px">56</span><span style="left:1384.1px">63726 → 8082 [ACK] Seq=130 Ack=1934 Win=406336 Len=0 TSval=3155057379 TSecr=103557743</span></div>
<div class="row" style="left:0;top:1012.160px;background:#e7e6ff;color:#12272e;width:2790px"><span style="right:2558.0px">37746</span><span style="left:249.8px">2023-10-22 19:17:37.219970</span><span style="left:670.3px">127.0.0.1</span><span style="left:858.3px">127.0.0.1</span><span style="left:1108.1px">TCP</span><span style="right:1422.9px">180</span><span style="left:1384.1px">8082 → 63726 [PSH, ACK] Seq=1934 Ack=130 Win=408128 Len=124 TSval=103557743 TSecr=3155057379 [TCP segment of a reassembled PDU]</span></div>
</div>
<div class="a" style="left:2767px;top:191.5px;width:28px;height:1000.9px;background:#fafafa;border-left:1px solid #efefef"></div>
<div class="a" style="left:2775.3px;top:197.4px;width:14px;height:30.5px;border-radius:7px;background:#7f7f7f"></div>
<svg class="a" style="left:0;top:191px" width="40" height="1031" viewBox="0 191 40 1031">
<path d="M20.1,1221 V208 H33" fill="none" stroke="#8a969a" stroke-width="1.8"/>
<path d="M20.1,349.65 V381.28" stroke="#fff" stroke-width="1.8"/>
<path d="M9,336.1 L14.7,339.7 L31.2,328.9" fill="none" stroke="#8a969a" stroke-width="1.8"/>
</svg>

<div class="a" style="left:5px;top:1221px;width:2790px;height:14.5px;background:#d2d2d2"></div>
<div class="a" style="left:5px;top:1234.3px;width:2790px;height:1.5px;background:#a8a8a8"></div>
<div class="a" style="left:5px;top:1235.8px;width:1722px;height:421px;background:#fff;overflow:hidden">
<div class="a" style="left:0;top:389.60px;width:1722px;height:29.9px;background:#d4d4d4"></div>
<div class="dl" style="left:78.5px;top:-20.53px">Source Port: 8082</div>
<div class="dl" style="left:78.5px;top:11.10px">Destination Port: 63726</div>
<div class="dl" style="left:78.5px;top:42.73px">[Stream index: 153]</div>
<div class="dl" style="left:78.5px;top:74.36px">[Conversation completeness: Incomplete, DATA (15)]</div>
<div class="dl" style="left:78.5px;top:105.99px">[TCP Segment Len: 0]</div>
<div class="dl" style="left:78.5px;top:137.62px">Sequence Number: 1    (relative sequence number)</div>
<div class="dl" style="left:78.5px;top:169.25px">Sequence Number (raw): 3978063161</div>
<div class="dl" style="left:78.5px;top:200.88px">[Next Sequence Number: 1    (relative sequence number)]</div>
<div class="dl" style="left:78.5px;top:232.51px">Acknowledgment Number: 130    (relative ack number)</div>
<div class="dl" style="left:78.5px;top:264.14px">Acknowledgment number (raw): 2225239226</div>
<div class="dl" style="left:78.5px;top:295.77px">1000 .... = Header Length: 32 bytes (8)</div>
<div class="dl" style="left:78.5px;top:327.40px">Flags: 0x010 (ACK)</div>
<div class="dl" style="left:78.5px;top:359.03px">Window: 6377</div>
<div class="dl" style="left:78.5px;top:390.66px">[Calculated window size: 408128]</div>
<svg class="a" style="left:0;top:0" width="100" height="421" viewBox="5 1235.8 100 421">
<path d="M56.8,1570.5 L63.6,1577.1 L56.8,1583.7" fill="none" stroke="#ababab" stroke-width="1.9"/>
</svg>

</div>
<div class="a" style="left:1726.8px;top:1235.8px;width:15px;height:421px;background:#d0d0d0;border-left:1px solid #bdbdbd;border-right:1px solid #bdbdbd"></div>
<div class="a" style="left:1729.2px;top:1440.4px;width:10.6px;height:10.6px;border-radius:50%;background:#b8b8b8"></div>
<div class="a" style="left:1394.5px;top:1223.4px;width:10.6px;height:10.6px;border-radius:50%;background:#c0c0c0"></div>
<div class="a" style="left:1741px;top:1235.8px;width:1054px;height:421px;background:#fff;overflow:hidden">
<div class="a" style="left:0;top:0;width:84px;height:421px;background:#ebebeb"></div>
<div class="a" style="left:438.88px;top:27.70px;width:315.90px;height:26.4px;background:#ececec"></div>
<div class="a" style="left:95.51px;top:54.10px;width:659.28px;height:26.4px;background:#ececec"></div>
<div class="a" style="left:95.51px;top:80.50px;width:315.90px;height:26.4px;background:#ececec"></div>
<div class="a" style="left:919.61px;top:27.70px;width:109.88px;height:26.4px;background:#ececec"></div>
<div class="a" style="left:795.99px;top:54.10px;width:233.50px;height:26.4px;background:#ececec"></div>
<div class="a" style="left:795.99px;top:80.50px;width:109.88px;height:26.4px;background:#ececec"></div>
<div class="a" style="left:342.74px;top:54.10px;width:68.67px;height:26.4px;background:#a6cdfd"></div>
<div class="a" style="left:878.40px;top:54.10px;width:27.47px;height:26.4px;background:#a6cdfd"></div>
<div class="hx" style="left:13.10px;top:2.80px;color:#9a9a9a">0000</div>
<div class="hx" style="left:95.51px;top:2.80px">02 00 00 00 45 00 00 34  00 00 40 00 40 06 00 00</div>
<div class="hx" style="left:795.99px;top:2.80px">····E··4 ··@·@···</div>
<div class="hx" style="left:13.10px;top:29.20px;color:#9a9a9a">0010</div>
<div class="hx" style="left:95.51px;top:29.20px">7f 00 00 01 7f 00 00 01  1f 92 f8 ee ed 1c 6d 39</div>
<div class="hx" style="left:795.99px;top:29.20px">········ ······m9</div>
<div class="hx" style="left:13.10px;top:55.60px;color:#1e1e1e">0020</div>
<div class="hx" style="left:95.51px;top:55.60px">84 a2 74 ba 80 10 18 e9  fe 28 00 00 01 01 08 0a</div>
<div class="hx" style="left:795.99px;top:55.60px">··t····· ·(······</div>
<div class="hx" style="left:13.10px;top:82.00px;color:#9a9a9a">0030</div>
<div class="hx" style="left:95.51px;top:82.00px">06 2c 1e 6e bc 0e 4e e2</div>
<div class="hx" style="left:795.99px;top:82.00px">·,·n··N·</div>
</div>
<div class="a" style="left:0;top:1655.3px;width:2800px;height:2px;background:#a6a6a6"></div>
<div class="a" style="left:0;top:1657.3px;width:2800px;height:47px;background:linear-gradient(#e9e9e9,#d2d2d2 40%,#b7b7b7)"></div>
<svg class="a" style="left:0;top:1657px" width="100" height="45" viewBox="0 1657 100 45">
<defs><radialGradient id="rc" cx="0.38" cy="0.25" r="0.85"><stop offset="0" stop-color="#f0a0a0"/><stop offset="0.55" stop-color="#e87474"/><stop offset="1" stop-color="#e04e50"/></radialGradient>
<linearGradient id="eb" x1="0" y1="0" x2="1" y2="0"><stop offset="0" stop-color="#66b8e4"/><stop offset="1" stop-color="#1e94d8"/></linearGradient></defs>
<circle cx="33.4" cy="1679.3" r="11.7" fill="url(#rc)" stroke="#6e3a3c" stroke-width="1.7"/>
<rect x="66.3" y="1667.2" width="18" height="23.6" fill="#f4f4ee"/>
<path d="M66.3,1667.2 H83.8 V1673.3 H66.3 Z" fill="url(#eb)"/>
<path d="M69.9,1673.3 C70.5,1670.5 72,1669 74.5,1668.6 C73.6,1670 73.6,1672 74,1673.3 Z" fill="#f4f4ee"/>
<g font-family="Liberation Serif" font-size="5.8" font-weight="bold" fill="#c4c4c0" letter-spacing="0.7"><text x="67.6" y="1679.2">010</text><text x="67.6" y="1684.6">011</text><text x="67.6" y="1689.6">01100</text></g>
<path d="M76.5,1679.6 L86.5,1669.6" stroke="#5a5c5a" stroke-width="6.4" stroke-linecap="round"/>
<path d="M84.2,1671.9 L86.6,1674.3" stroke="#e6e6e6" stroke-width="0.9"/>
<path d="M71.6,1684.6 L73.4,1678.6 L77.6,1682.6 Z" fill="#000" stroke="#000" stroke-width="0.8" stroke-linejoin="round"/>
</svg>
<div class="a sans" style="left:124.5px;top:1666.5px;font-size:21px;line-height:30px;color:#000;white-space:pre;-webkit-text-stroke:0.2px #000">The scaled window size (if scaling has been used) (tcp.window_size), 2 bytes</div>
<div class="a" style="left:1834.5px;top:1676px;width:10px;height:10px;border-radius:50%;background:#c2c2c2"></div>
<div class="a sans" style="left:1865px;top:1666.5px;font-size:20.68px;line-height:30px;color:#000;white-space:pre;-webkit-text-stroke:0.2px #000">Packets: 391294 · Displayed: 12000 (3.1%)</div>
<div class="a" style="left:2601px;top:1676px;width:10px;height:10px;border-radius:50%;background:#c2c2c2"></div>
<div class="a sans" style="left:2632px;top:1666.5px;font-size:21.2px;line-height:30px;color:#000;white-space:pre;-webkit-text-stroke:0.2px #000">Profile: Default</div>

</div>
<div class="a" style="left:2.6px;top:1.5px;width:2794.8px;height:1701px;border:1.3px solid #b5b5b5;border-radius:20px 20px 12px 12px;pointer-events:none"></div>
</body></html>
